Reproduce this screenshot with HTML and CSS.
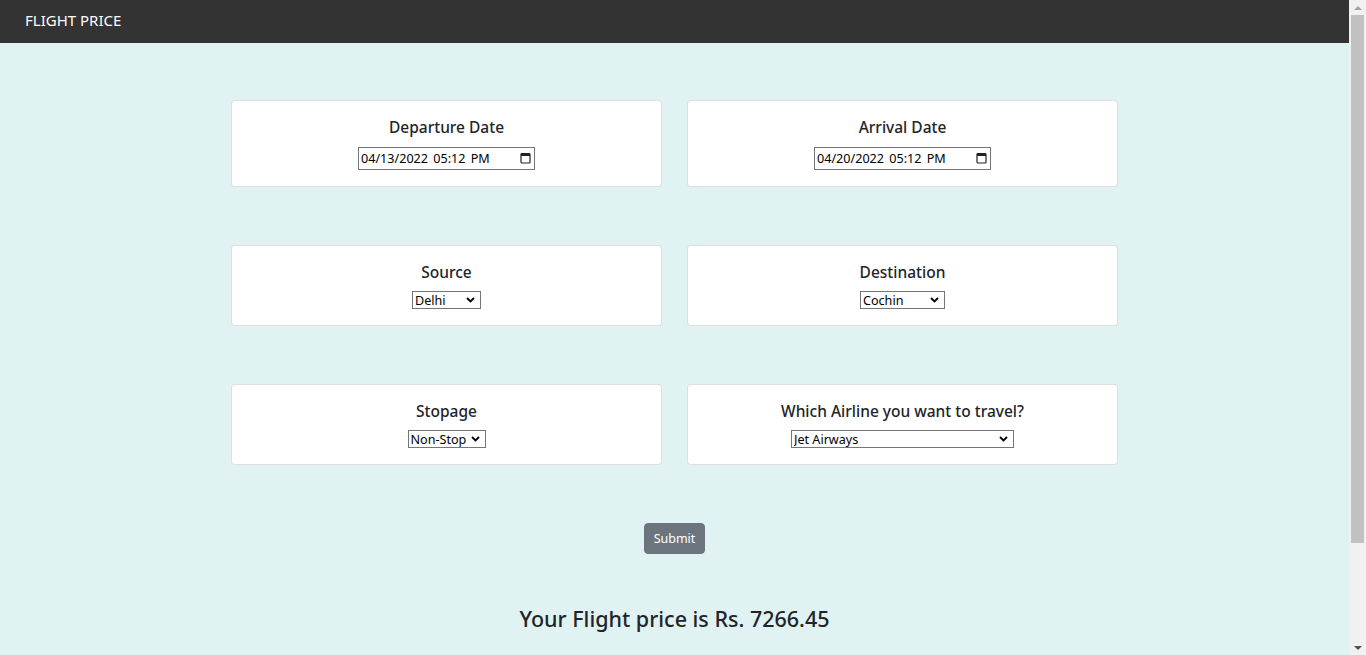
FILE: index.html
```html
<!DOCTYPE html>
<html lang="en">
<head>
<meta charset="utf-8">
<title>Flight Price</title>
<link rel="stylesheet" href="styles.css">
</head>
<body>
<div class="app">
  <div class="page">
    <nav class="navbar"><span class="brand">FLIGHT PRICE</span></nav>
    <main class="content">
      <form class="grid">
        <div class="card">
          <h5 class="card-title">Departure Date</h5>
          <label class="date-field">
            <input class="date-text" type="text" value="04/13/2022 05:12 PM">
            <svg class="cal" width="11" height="12" viewBox="0 0 11 12" aria-hidden="true"><rect x="1" y="1.5" width="9" height="9.5" rx="1" fill="none" stroke="#222" stroke-width="1.2"/><rect x="1" y="1.5" width="9" height="2.5" fill="#222"/></svg>
          </label>
        </div>
        <div class="card">
          <h5 class="card-title">Arrival Date</h5>
          <label class="date-field">
            <input class="date-text" type="text" value="04/20/2022 05:12 PM">
            <svg class="cal" width="11" height="12" viewBox="0 0 11 12" aria-hidden="true"><rect x="1" y="1.5" width="9" height="9.5" rx="1" fill="none" stroke="#222" stroke-width="1.2"/><rect x="1" y="1.5" width="9" height="2.5" fill="#222"/></svg>
          </label>
        </div>
        <div class="card small">
          <h5 class="card-title">Source</h5>
          <label class="select-field w-source">
            <select class="sel"><option>Delhi</option><option>Kolkata</option><option>Mumbai</option><option>Chennai</option></select>
            <svg class="chev" width="9" height="6" viewBox="0 0 9 6" aria-hidden="true"><path d="M1 1 L4.5 4.5 L8 1" fill="none" stroke="#000" stroke-width="1.8"/></svg>
          </label>
        </div>
        <div class="card small">
          <h5 class="card-title">Destination</h5>
          <label class="select-field w-dest">
            <select class="sel"><option>Cochin</option><option>Delhi</option><option>New Delhi</option><option>Hyderabad</option><option>Kolkata</option></select>
            <svg class="chev" width="9" height="6" viewBox="0 0 9 6" aria-hidden="true"><path d="M1 1 L4.5 4.5 L8 1" fill="none" stroke="#000" stroke-width="1.8"/></svg>
          </label>
        </div>
        <div class="card small">
          <h5 class="card-title">Stopage</h5>
          <label class="select-field w-stop">
            <select class="sel"><option>Non-Stop</option><option>1</option><option>2</option><option>3</option><option>4</option></select>
            <svg class="chev" width="9" height="6" viewBox="0 0 9 6" aria-hidden="true"><path d="M1 1 L4.5 4.5 L8 1" fill="none" stroke="#000" stroke-width="1.8"/></svg>
          </label>
        </div>
        <div class="card small">
          <h5 class="card-title">Which Airline you want to travel?</h5>
          <label class="select-field w-air">
            <select class="sel"><option>Jet Airways</option><option>IndiGo</option><option>Air India</option><option>SpiceJet</option><option>Multiple carriers</option></select>
            <svg class="chev" width="9" height="6" viewBox="0 0 9 6" aria-hidden="true"><path d="M1 1 L4.5 4.5 L8 1" fill="none" stroke="#000" stroke-width="1.8"/></svg>
          </label>
        </div>
      </form>
      <div class="actions"><button class="btn" type="button">Submit</button></div>
      <h3 class="result">Your Flight price is Rs. 7266.45</h3>
    </main>
  </div>
  <div class="scrollbar" aria-hidden="true">
    <div class="sb-btn"><span class="tri-up"></span></div>
    <div class="sb-thumb"></div>
    <div class="sb-track"></div>
    <div class="sb-btn"><span class="tri-down"></span></div>
  </div>
</div>
</body>
</html>
```

FILE: styles.css
```css
html, body {
  margin: 0;
  padding: 0;
  height: 100%;
  overflow: hidden;
}
body {
  background: #e0f2f1;
  font-family: "Noto Sans", "Open Sans", sans-serif;
  color: #212529;
}
.app {
  display: flex;
  height: 100vh;
  overflow: hidden;
}
.page {
  flex: 1;
  min-width: 0;
  overflow: hidden;
}
.navbar {
  height: 43px;
  box-sizing: border-box;
  background: #333333;
  display: flex;
  align-items: center;
  padding: 0 0 3px 25px;
}
.brand {
  color: #ffffff;
  font-size: 15px;
}
.content {
  padding-top: 57px;
  padding-bottom: 120px;
}
.grid {
  display: grid;
  grid-template-columns: 431px 431px;
  column-gap: 25px;
  row-gap: 58px;
  justify-content: center;
  margin: 0;
}
.card {
  background: #ffffff;
  border: 1px solid rgba(0, 0, 0, 0.125);
  border-radius: 4px;
  padding: 14px 15px 16px;
  text-align: center;
  display: flex;
  flex-direction: column;
  align-items: center;
}
.card-title {
  margin: 0 0 8px;
  font-size: 15.5px;
  font-weight: 500;
  line-height: 24px;
}
.card.small .card-title {
  margin-bottom: 7px;
}
.date-field {
  display: flex;
  align-items: center;
  width: 177px;
  height: 23px;
  box-sizing: border-box;
  border: 1px solid #767676;
  background: #ffffff;
  padding: 0 3px 0 2px;
}
.date-text {
  flex: 1;
  min-width: 0;
  border: 0;
  padding: 0;
  margin: 0;
  outline: none;
  background: transparent;
  font-family: "Noto Sans", sans-serif;
  font-size: 12.6px;
  word-spacing: 2px;
  color: #000000;
  height: 21px;
}
.cal {
  flex: none;
  margin-bottom: 1px;
}
.select-field {
  display: flex;
  align-items: center;
  height: 18px;
  box-sizing: border-box;
  border: 1px solid #767676;
  background: #ffffff;
  padding-right: 5px;
}
.sel {
  appearance: none;
  -webkit-appearance: none;
  flex: 1;
  min-width: 0;
  height: 16px;
  border: 0;
  margin: 0;
  padding: 1px 0 0 2px;
  background: transparent;
  outline: none;
  font-family: "Noto Sans", sans-serif;
  font-size: 12.6px;
  line-height: 15px;
  color: #000000;
}
.chev {
  flex: none;
}
.w-source { width: 69px; }
.w-dest { width: 85px; }
.w-stop { width: 78px; }
.w-air { width: 223px; }
.actions {
  display: flex;
  justify-content: center;
  margin-top: 58px;
}
.btn {
  background: #6c757d;
  color: #ffffff;
  border: 1px solid #6c757d;
  border-radius: 4px;
  font-family: "Noto Sans", sans-serif;
  font-size: 12.5px;
  line-height: 21px;
  padding: 4px 8px;
  width: 61px;
  height: 31px;
}
.result {
  margin: 50px 0 0;
  text-align: center;
  font-size: 21.5px;
  font-weight: 500;
  line-height: 29px;
}
.scrollbar {
  flex: none;
  width: 17px;
  background: #f1f1f1;
  display: flex;
  flex-direction: column;
}
.sb-btn {
  flex: none;
  height: 15px;
  display: flex;
  align-items: center;
  justify-content: center;
}
.sb-thumb {
  flex: none;
  height: 528px;
  margin: 0 2px;
  background: #c1c1c1;
}
.sb-track {
  flex: 1;
}
.tri-up {
  width: 0;
  height: 0;
  border-left: 4px solid transparent;
  border-right: 4px solid transparent;
  border-bottom: 4px solid #a3a3a3;
}
.tri-down {
  width: 0;
  height: 0;
  border-left: 4px solid transparent;
  border-right: 4px solid transparent;
  border-top: 4px solid #505050;
}
```
